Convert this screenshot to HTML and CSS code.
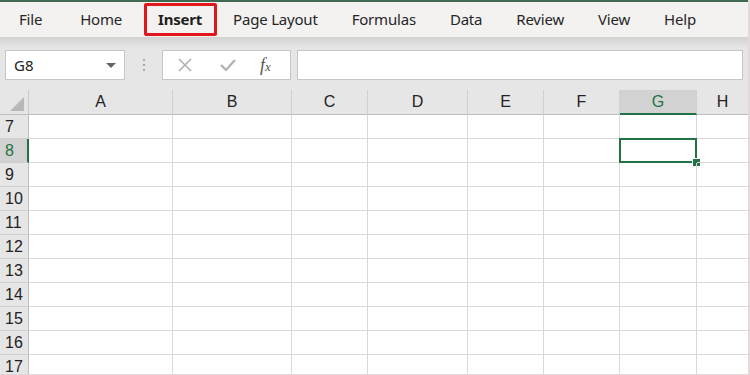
FILE: index.html
```html
<!DOCTYPE html>
<html>
<head lang="en">
    <meta charset="UTF-8">
    <title>Excel</title>
    <link rel="stylesheet" href="styles.css">
</head>
<body>
<div class="app">
    <div class="topline"></div>
    <ul class="tabs">
        <li class="tab first">File</li>
        <li class="tab">Home</li>
        <li class="tab active">Insert</li>
        <li class="tab">Page Layout</li>
        <li class="tab">Formulas</li>
        <li class="tab">Data</li>
        <li class="tab">Review</li>
        <li class="tab">View</li>
        <li class="tab">Help</li>
    </ul>
    <div class="fbar">
        <div class="namebox">
            <span>G8</span>
            <em class="drop"></em>
        </div>
        <div class="dots"><i></i><i></i><i></i></div>
        <div class="fbtns">
            <svg class="ico" width="16" height="16" viewBox="0 0 16 16"><path d="M2 2L14 14M14 2L2 14" stroke="#b0b0b0" stroke-width="1.6" fill="none"/></svg>
            <svg class="ico" width="18" height="16" viewBox="0 0 18 16"><path d="M2 8L7 13L16 3" stroke="#b0b0b0" stroke-width="2.2" fill="none"/></svg>
            <span class="fx">f<small>x</small></span>
        </div>
        <div class="finput"></div>
    </div>
    <div class="sheet" id="sheet">
        <div class="corner"><b></b></div>
        <div class="ch">A</div>
        <div class="ch">B</div>
        <div class="ch">C</div>
        <div class="ch">D</div>
        <div class="ch">E</div>
        <div class="ch">F</div>
        <div class="ch sel">G</div>
        <div class="ch last">H</div>
    </div>
</div>
<script type="text/javascript">
    //生成行 7-17
    var sheet=document.getElementById("sheet");
    var html="";
    for(var r=7;r<=17;r++){
        html+='<div class="rh'+(r==8?' sel':'')+'">'+r+'</div>';
        for(var c=0;c<8;c++){
            var cls="cell";
            if(c==7) cls+=" last";
            if(r==8&&c==6) cls+=" active";
            html+='<div class="'+cls+'">'+(r==8&&c==6?'<em class="handle"></em>':'')+'</div>';
        }
    }
    sheet.innerHTML+=html;
</script>
</body>
</html>
```

FILE: styles.css
```css
* {
    padding: 0;
    margin: 0;
    box-sizing: border-box;
}
body {
    font-family: "Noto Sans", "Open Sans", sans-serif;
    width: 750px;
    height: 375px;
    overflow: hidden;
    background: #fff;
}
ul { list-style: none; }
.app {
    width: 750px;
    height: 375px;
    overflow: hidden;
    border-right: 2px solid #e2dada;
    border-bottom: 1px solid #e2d6d6;
}
.topline {
    height: 2px;
    background: #3f6b53;
}
.tabs {
    display: flex;
    height: 35px;
    padding-left: 2px;
    background: #f3f2f1;
    font-size: 15px;
    color: #262626;
}
.tab {
    padding: 0 17px;
    line-height: 33px;
    margin-top: 1px;
    height: 33px;
    letter-spacing: -0.2px;
}
.tab.first { margin-right: 4px; }
.tab.active {
    width: 73px;
    margin-left: 5px;
    margin-right: -1px;
    border: 3px solid #e3161c;
    border-radius: 2px;
    padding: 0 0 0 11px;
    line-height: 27px;
    font-weight: bold;
    color: #1f1f1f;
}
.fbar {
    display: flex;
    align-items: center;
    height: 53px;
    padding: 3px 5px 0 5px;
    background: linear-gradient(#d2d2d1, #e6e6e6 11px);
}
.namebox, .fbtns, .finput {
    height: 30px;
    background: #fff;
    border: 1px solid #c6c6c6;
}
.namebox {
    width: 120px;
    display: flex;
    align-items: center;
    justify-content: space-between;
    padding: 0 8px 0 8px;
    font-size: 15px;
    color: #222;
}
.namebox .drop {
    width: 0;
    height: 0;
    border-left: 5px solid transparent;
    border-right: 5px solid transparent;
    border-top: 5px solid #666;
}
.dots {
    width: 37px;
    display: flex;
    flex-direction: column;
    align-items: center;
    gap: 3px;
}
.dots i {
    width: 2px;
    height: 2px;
    background: #a8a8a8;
}
.fbtns {
    width: 129px;
    display: flex;
    align-items: center;
    padding-left: 14px;
}
.fbtns .ico { margin-right: 26px; }
.fbtns .ico + .ico { margin-right: 23px; }
.fx {
    font-family: "Liberation Serif", serif;
    font-style: italic;
    font-size: 18px;
    color: #555;
}
.fx small { font-size: 13px; }
.finput {
    margin-left: 6px;
    flex: 1;
}
.sheet {
    display: grid;
    grid-template-columns: 29px 144px 119px 76px 100px 76px 76px 77px 1fr;
    grid-template-rows: 25px;
    grid-auto-rows: 24px;
    font-family: "Liberation Sans", sans-serif;
    font-size: 16px;
    color: #222;
}
.corner {
    position: relative;
    background: #e6e6e6;
    border-right: 1px solid #c9c9c9;
    border-bottom: 1px solid #bdbdbd;
}
.corner b {
    position: absolute;
    right: 4px;
    bottom: 3px;
    width: 0;
    height: 0;
    border-left: 14px solid transparent;
    border-bottom: 14px solid #b8b8b8;
}
.ch {
    background: #e6e6e6;
    text-align: center;
    line-height: 24px;
    border-right: 1px solid #cfcfcf;
    border-bottom: 1px solid #bdbdbd;
}
.ch.sel {
    background: #d2d2d2;
    color: #217346;
    border-bottom: 2px solid #217346;
}
.ch.last, .cell.last { border-right: 0; }
.rh {
    background: #e6e6e6;
    padding-left: 5px;
    line-height: 24px;
    border-right: 1px solid #bdbdbd;
    border-bottom: 1px solid #cfcfcf;
}
.rh.sel {
    background: #d2d2d2;
    color: #217346;
    border-right: 2px solid #217346;
}
.cell {
    position: relative;
    border-right: 1px solid #d9d9d9;
    border-bottom: 1px solid #d9d9d9;
}
.cell.active {
    border: 2px solid #217346;
    margin: -1px 0 0 -1px;
}
.handle {
    position: absolute;
    right: -6px;
    bottom: -6px;
    width: 9px;
    height: 9px;
    background: #217346;
    border: 1px solid #fff;
}
```
